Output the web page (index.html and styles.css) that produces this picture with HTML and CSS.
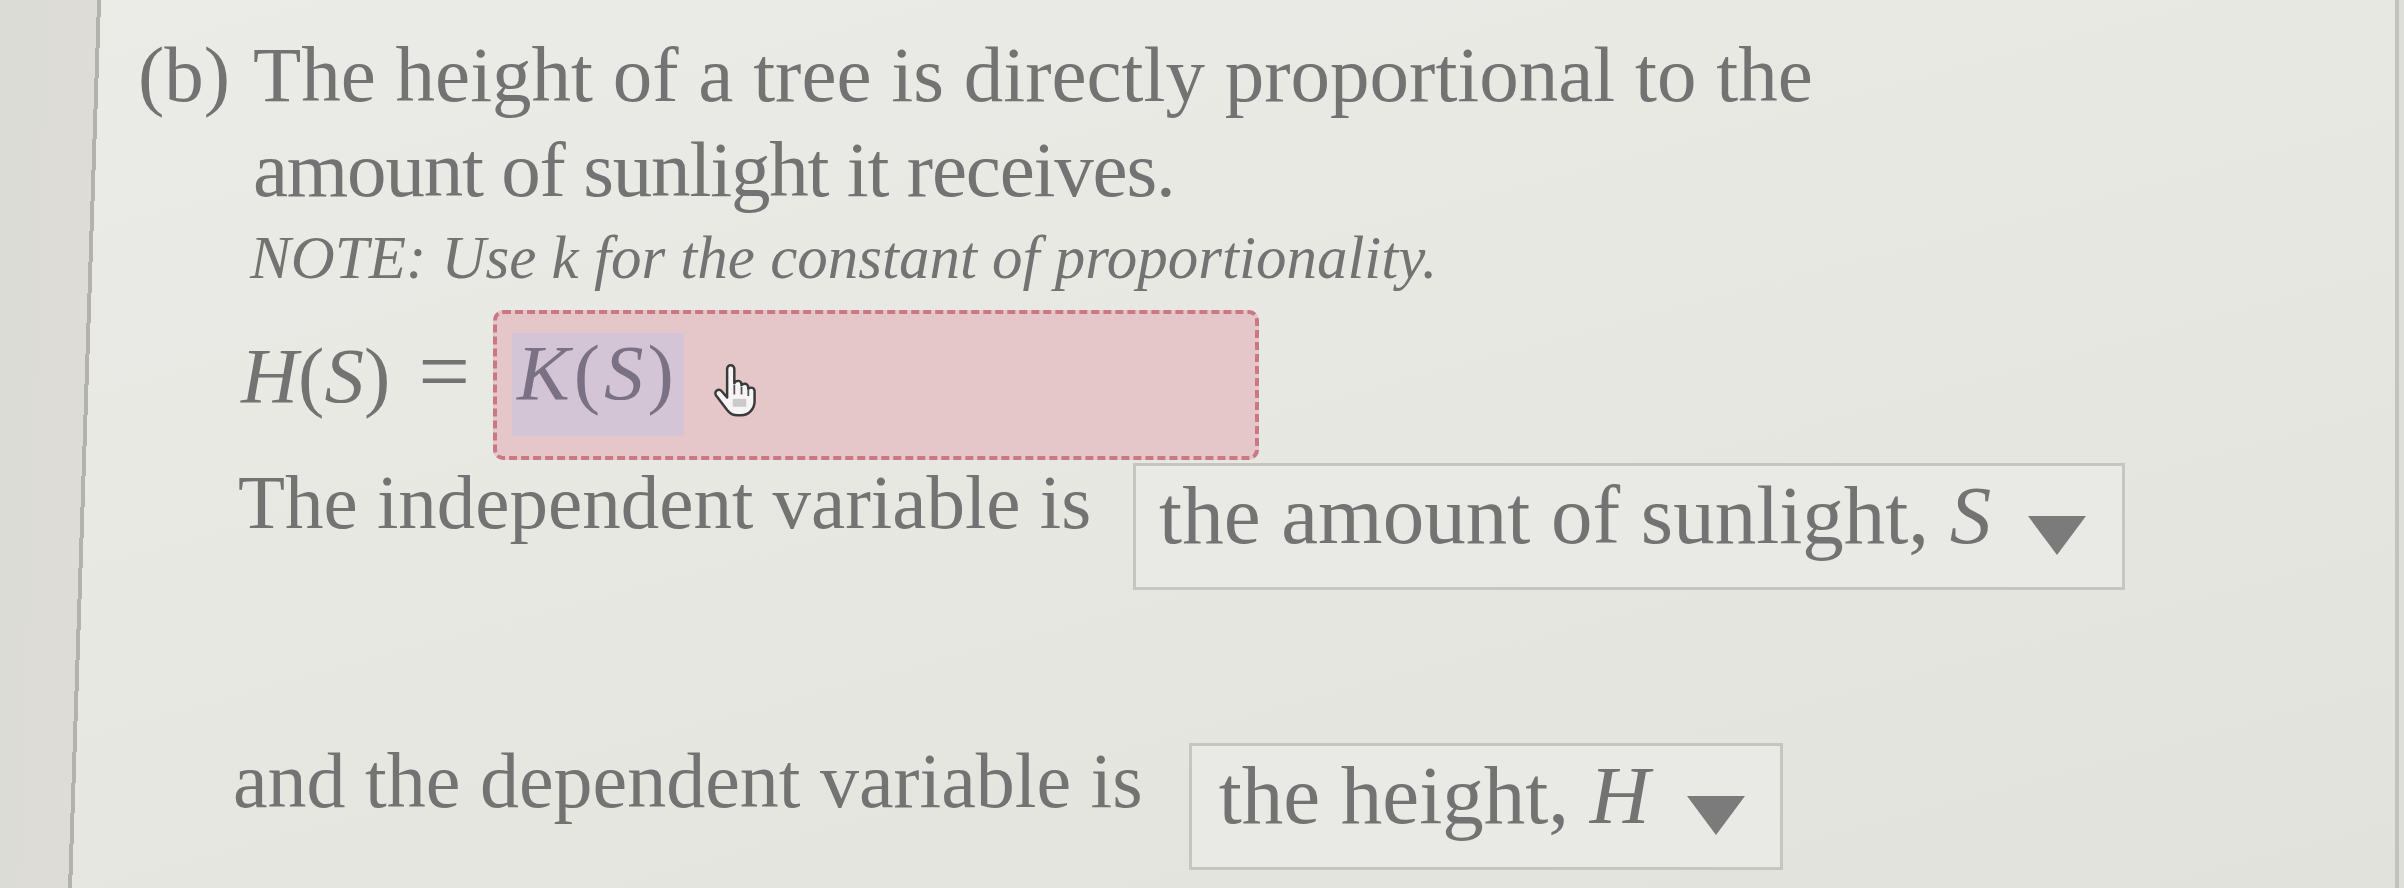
FILE: index.html
```html
<!DOCTYPE html>
<html lang="en">
<head>
<meta charset="utf-8">
<title>Direct proportion</title>
<link rel="stylesheet" href="styles.css">
</head>
<body>
<div class="page">
  <div class="part">
    <div class="part-label">(b)</div>
    <div class="part-body">
      <p class="stmt">The height of a tree is directly proportional to the amount of sunlight it receives.</p>
      <p class="note">NOTE: Use k for the constant of proportionality.</p>

      <div class="row row-eq">
        <span class="eq-lhs"><i>H</i>(<i>S</i>)<span class="rel">=</span></span>
        <div class="answer-box">
          <span class="answer-hl"><i>K</i>(<i>S</i>)</span>
          <svg class="cursor" viewBox="0 0 22 24" width="50" height="54" aria-hidden="true">
            <path d="M7.5 2.2c0-.9.7-1.6 1.6-1.6s1.6.7 1.6 1.6v6.3c.3-.6.9-1 1.6-1 .9 0 1.6.7 1.6 1.6v.4c.3-.4.8-.7 1.4-.7.9 0 1.6.7 1.6 1.6v.6c.3-.3.7-.5 1.2-.5.9 0 1.6.7 1.6 1.6v4.4c0 3.4-2.6 6.3-6 6.3h-1.6c-1.9 0-3.5-.9-4.6-2.4L2.6 14c-.5-.7-.4-1.7.3-2.2.7-.5 1.6-.4 2.2.3l2.4 2.8z" fill="#f6f4f4" stroke="#3a3a3a" stroke-width="1.1" stroke-linejoin="round"/>
            <path d="M10.7 9.2v4.3M13.9 10.2v3.4M16.9 11.2v3" stroke="#555" stroke-width=".8" fill="none"/>
            <path d="M10 15.5h6v3.5h-6z" fill="#b9b6b6" opacity=".7"/>
          </svg>
        </div>
      </div>

      <div class="row row-ind">
        <span class="row-label lbl-ind">The independent variable is</span>
        <div class="select select-wide">
          <span class="select-text">the amount of sunlight, <i>S</i></span>
          <span class="caret"></span>
        </div>
      </div>

      <div class="row row-dep">
        <span class="row-label lbl-dep">and the dependent variable is</span>
        <div class="select select-narrow">
          <span class="select-text">the height, <i>H</i></span>
          <span class="caret"></span>
        </div>
      </div>
    </div>
  </div>
</div>
</body>
</html>
```
FILE: styles.css
```css
html, body {
  margin: 0;
  padding: 0;
}

body {
  width: 2404px;
  height: 888px;
  overflow: hidden;
  font-family: "Liberation Serif", "Times New Roman", serif;
  color: #737373;
  background:
    linear-gradient(91.87deg, #dcdcd6 0, #dddcd7 97px, #b3b3ae 97px, #b3b3ae 101px, transparent 101px),
    linear-gradient(90deg, transparent 2395px, #c3c3be 2395px, #c3c3be 2399px, #dfdfda 2399px),
    linear-gradient(165deg, #ebebe7 0%, #e7e7e2 55%, #e2e2dd 100%);
}

.page {
  padding: 27px 0 0 138px;
}

.part {
  display: flex;
}

.part-label {
  flex: none;
  width: 115px;
  font-size: 79px;
  line-height: 95px;
}

.part-body {
  flex: 1;
}

.stmt {
  margin: 0;
  max-width: 1700px;
  font-size: 79px;
  line-height: 95px;
  letter-spacing: -1.2px;
}

.stmt::first-line {
  letter-spacing: 0;
}

.note {
  margin: 1px 0 0 -3px;
  font-style: italic;
  font-size: 61px;
  line-height: 80px;
}

.row {
  display: flex;
  align-items: flex-start;
}

/* equation row */
.row-eq {
  margin: 12px 0 0 -12px;
}

.eq-lhs {
  margin-top: 18px;
  font-size: 79px;
  line-height: 95px;
  white-space: nowrap;
}

.rel {
  display: inline-block;
  margin: 0 20px 0 28px;
  font-size: 92px;
  line-height: 80px;
}

.answer-box {
  box-sizing: border-box;
  width: 766px;
  height: 150px;
  margin-left: 3px;
  padding-left: 15px;
  display: flex;
  align-items: center;
  border: 4px dashed #c97884;
  border-radius: 10px;
  background: #e5c6c9;
}

.answer-hl {
  box-sizing: border-box;
  width: 172px;
  height: 103px;
  padding-left: 5px;
  margin-top: -2px;
  background: #d3c5d5;
  color: #7a7284;
  font-size: 79px;
  line-height: 80px;
  letter-spacing: 4px;
  white-space: nowrap;
}

.cursor {
  flex: none;
  margin: 12px 0 0 26px;
}

/* select rows */
.row-label {
  white-space: nowrap;
  line-height: 80px;
}

.row-ind {
  margin: 2px 0 0 -15px;
}

.lbl-ind {
  font-size: 77px;
}

.row-dep {
  margin: 151px 0 0 -20px;
}

.lbl-dep {
  font-size: 78px;
}

.select {
  box-sizing: border-box;
  height: 127px;
  display: flex;
  align-items: flex-start;
  border: 3px solid #c5c5c1;
  background: #e9e9e5;
  font-size: 83px;
  line-height: 92px;
  white-space: nowrap;
}

.select-wide {
  width: 992px;
  margin: 1px 0 0 42px;
  padding: 3px 36px 0 23px;
}

.select-narrow {
  width: 594px;
  margin: 2px 0 0 46px;
  padding: 3px 35px 0 27px;
}

.caret {
  flex: none;
  width: 0;
  height: 0;
  margin-left: auto;
  margin-top: 47px;
  border-left: 29px solid transparent;
  border-right: 29px solid transparent;
  border-top: 39px solid #7b7b7b;
}
```
